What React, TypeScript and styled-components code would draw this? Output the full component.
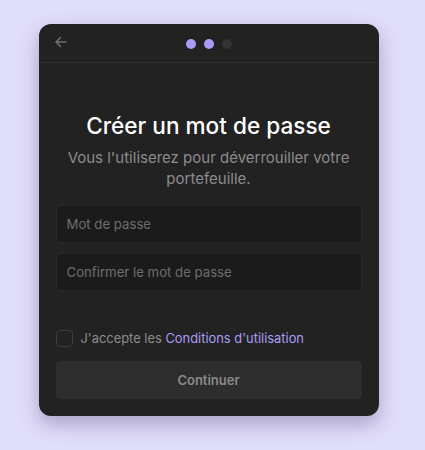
import React from 'react';
import styled, { createGlobalStyle } from 'styled-components';

const GlobalStyle = createGlobalStyle`
    html, body {
        margin: 0;
        padding: 0;
        background: #e1defa;
        font-family: 'Inter', 'Liberation Sans', sans-serif;
    }
`;

const Page = styled.div`
    width: 425px;
    height: 450px;
    padding-top: 24px;
    box-sizing: border-box;
    display: flex;
    justify-content: center;
`;

const Card = styled.div`
    width: 340px;
    height: 392px;
    margin-left: -8px;
    background: #222222;
    border-radius: 12px;
    box-shadow: 0 8px 20px rgba(60, 50, 110, 0.35);
    display: flex;
    flex-direction: column;
    overflow: hidden;
`;

const Header = styled.div`
    height: 38px;
    border-bottom: 1px solid #2f2f2f;
    display: flex;
    align-items: center;
    justify-content: center;
    position: relative;
`;

const BackButton = styled.button`
    position: absolute;
    left: 15px;
    top: 11px;
    width: 16px;
    height: 16px;
    padding: 0;
    border: none;
    background: transparent;
    color: #6e6e6e;
    display: flex;
`;

const Dots = styled.div`
    display: flex;
    gap: 8px;
    margin-top: 1px;
`;

const Dot = styled.span<{ $active: boolean }>`
    width: 10px;
    height: 10px;
    border-radius: 50%;
    background: ${p => (p.$active ? '#a99cf5' : '#333333')};
`;

const Body = styled.div`
    flex: 1;
    padding: 49px 17px 17px;
    display: flex;
    flex-direction: column;
`;

const Title = styled.h1`
    margin: 0;
    text-align: center;
    color: #ffffff;
    font-size: 22.6px;
    font-weight: 500;
    line-height: 28px;
`;

const Subtitle = styled.p`
    margin: 7px 0 0;
    text-align: center;
    color: #8c8c8c;
    font-size: 15px;
    line-height: 21px;
`;

const Fields = styled.div`
    margin-top: 16px;
    display: flex;
    flex-direction: column;
    gap: 10px;
`;

const Input = styled.input`
    height: 38px;
    box-sizing: border-box;
    background: #1b1b1b;
    border: 1px solid #2a2a2a;
    border-radius: 4px;
    padding: 0 10px;
    color: #ddd;
    font-family: 'Inter', 'Liberation Sans', sans-serif;
    font-size: 13.2px;
    outline: none;
    &::placeholder {
        color: #6e6e6e;
    }
`;

const Terms = styled.label`
    margin-top: auto;
    display: flex;
    align-items: center;
    gap: 8px;
    color: #8c8c8c;
    font-size: 12.9px;
`;

const Box = styled.span`
    width: 17px;
    height: 17px;
    box-sizing: border-box;
    border: 1.5px solid #3c3c3c;
    border-radius: 4px;
`;

const Link = styled.span`
    color: #a99cf5;
`;

const Button = styled.button`
    margin-top: 14px;
    height: 38px;
    border: none;
    border-radius: 4px;
    background: #2d2d2d;
    color: #8a8a8a;
    font-family: 'Inter', 'Liberation Sans', sans-serif;
    font-size: 13px;
    font-weight: 600;
`;

const App = () => {
    return (
        <Page>
            <GlobalStyle />
            <Card>
                <Header>
                    <BackButton aria-label='retour'>
                        <svg width='14' height='14' viewBox='0 0 14 14' fill='none' stroke='currentColor' strokeWidth='1.5' strokeLinecap='round' strokeLinejoin='round'>
                            <path d='M12 7H2M6.5 2.5L2 7l4.5 4.5' />
                        </svg>
                    </BackButton>
                    <Dots>
                        <Dot $active={true} />
                        <Dot $active={true} />
                        <Dot $active={false} />
                    </Dots>
                </Header>
                <Body>
                    <Title>Créer un mot de passe</Title>
                    <Subtitle>Vous l'utiliserez pour déverrouiller votre portefeuille.</Subtitle>
                    <Fields>
                        <Input type='password' placeholder='Mot de passe' />
                        <Input type='password' placeholder='Confirmer le mot de passe' />
                    </Fields>
                    <Terms>
                        <Box />
                        <span>J'accepte les <Link>Conditions d'utilisation</Link></span>
                    </Terms>
                    <Button>Continuer</Button>
                </Body>
            </Card>
        </Page>
    );
};

export default App;
